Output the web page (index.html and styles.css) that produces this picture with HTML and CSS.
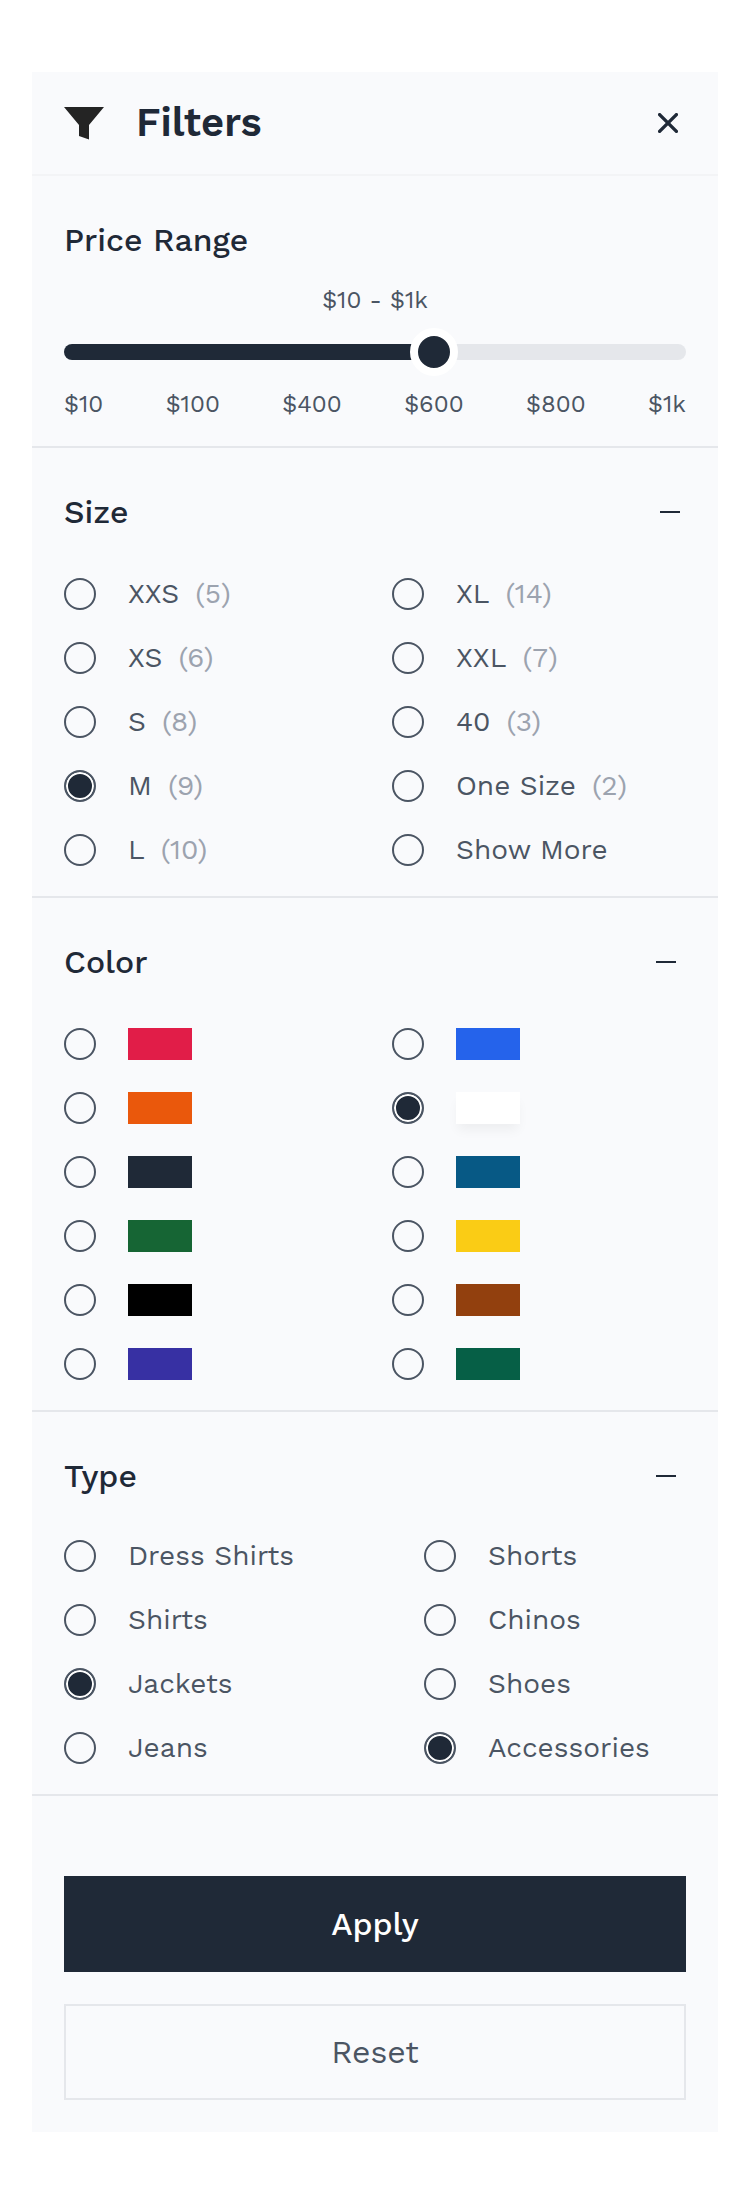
FILE: index.html
```html
<!DOCTYPE html>
<html lang="en">
<head>
    <meta charset="UTF-8">
    <meta name="viewport" content="width=device-width, initial-scale=1.0">
    <title>Filters</title>

    <link rel="stylesheet" href="styles.css">
</head>
<body>
    <form class="filters">
        <!-- Header -->
        <header class="filters-header">
            <svg class="funnel" viewBox="0 0 40 34" aria-hidden="true">
                <path d="M0 1H40L25 19V33.5L15 30V19Z" fill="#242424"/>
            </svg>
            <h1>Filters</h1>
            <button type="button" class="icon-button close" aria-label="Close">
                <svg viewBox="0 0 20 20"><path d="M1.6 1.6L18.4 18.4M18.4 1.6L1.6 18.4" stroke="currentColor" stroke-width="3.4" stroke-linecap="round"/></svg>
            </button>
        </header>

        <!-- Price range -->
        <section class="section price">
            <h2><label for="price">Price Range</label></h2>
            <output class="price-value" for="price">$10 - $1k</output>
            <input type="range" id="price" class="slider" min="0" max="1000" value="603">
            <div class="price-scale">
                <span>$10</span>
                <span>$100</span>
                <span>$400</span>
                <span>$600</span>
                <span>$800</span>
                <span>$1k</span>
            </div>
        </section>

        <!-- Size -->
        <section class="section size">
            <div class="section-head">
                <h2>Size</h2>
                <button type="button" class="icon-button" aria-label="Collapse size">
                    <svg viewBox="0 0 20 20"><path d="M0 10H20" stroke="currentColor" stroke-width="2"/></svg>
                </button>
            </div>
            <div class="options">
                <div class="column">
                    <label class="option"><input type="radio" name="size">XXS <span class="count">(5)</span></label>
                    <label class="option"><input type="radio" name="size">XS <span class="count">(6)</span></label>
                    <label class="option"><input type="radio" name="size">S <span class="count">(8)</span></label>
                    <label class="option"><input type="radio" name="size" checked>M <span class="count">(9)</span></label>
                    <label class="option"><input type="radio" name="size">L <span class="count">(10)</span></label>
                </div>
                <div class="column">
                    <label class="option"><input type="radio" name="size">XL <span class="count">(14)</span></label>
                    <label class="option"><input type="radio" name="size">XXL <span class="count">(7)</span></label>
                    <label class="option"><input type="radio" name="size">40 <span class="count">(3)</span></label>
                    <label class="option"><input type="radio" name="size">One Size <span class="count">(2)</span></label>
                    <label class="option"><input type="radio" name="size">Show More</label>
                </div>
            </div>
        </section>

        <!-- Color -->
        <section class="section color">
            <div class="section-head">
                <h2>Color</h2>
                <button type="button" class="icon-button" aria-label="Collapse color">
                    <svg viewBox="0 0 20 20"><path d="M0 10H20" stroke="currentColor" stroke-width="2"/></svg>
                </button>
            </div>
            <div class="options">
                <div class="column">
                    <label class="option"><input type="radio" name="color" aria-label="Red"><span class="swatch red"></span></label>
                    <label class="option"><input type="radio" name="color" aria-label="Orange"><span class="swatch orange"></span></label>
                    <label class="option"><input type="radio" name="color" aria-label="Navy"><span class="swatch navy"></span></label>
                    <label class="option"><input type="radio" name="color" aria-label="Green"><span class="swatch green"></span></label>
                    <label class="option"><input type="radio" name="color" aria-label="Black"><span class="swatch black"></span></label>
                    <label class="option"><input type="radio" name="color" aria-label="Indigo"><span class="swatch indigo"></span></label>
                </div>
                <div class="column">
                    <label class="option"><input type="radio" name="color" aria-label="Blue"><span class="swatch blue"></span></label>
                    <label class="option"><input type="radio" name="color" aria-label="White" checked><span class="swatch white"></span></label>
                    <label class="option"><input type="radio" name="color" aria-label="Sea blue"><span class="swatch sea"></span></label>
                    <label class="option"><input type="radio" name="color" aria-label="Yellow"><span class="swatch yellow"></span></label>
                    <label class="option"><input type="radio" name="color" aria-label="Brown"><span class="swatch brown"></span></label>
                    <label class="option"><input type="radio" name="color" aria-label="Emerald"><span class="swatch emerald"></span></label>
                </div>
            </div>
        </section>

        <!-- Type -->
        <section class="section type">
            <div class="section-head">
                <h2>Type</h2>
                <button type="button" class="icon-button" aria-label="Collapse type">
                    <svg viewBox="0 0 20 20"><path d="M0 10H20" stroke="currentColor" stroke-width="2"/></svg>
                </button>
            </div>
            <div class="options">
                <div class="column">
                    <label class="option"><input type="radio" name="type1">Dress Shirts</label>
                    <label class="option"><input type="radio" name="type1">Shirts</label>
                    <label class="option"><input type="radio" name="type1" checked>Jackets</label>
                    <label class="option"><input type="radio" name="type1">Jeans</label>
                </div>
                <div class="column">
                    <label class="option"><input type="radio" name="type2">Shorts</label>
                    <label class="option"><input type="radio" name="type2">Chinos</label>
                    <label class="option"><input type="radio" name="type2">Shoes</label>
                    <label class="option"><input type="radio" name="type2" checked>Accessories</label>
                </div>
            </div>
        </section>

        <!-- Buttons -->
        <div class="actions">
            <button type="submit" class="button apply">Apply</button>
            <button type="reset" class="button reset">Reset</button>
        </div>
    </form>
</body>
</html>
```
FILE: styles.css
```css
* {
    box-sizing: border-box;
}

body {
    margin: 0;
    padding: 72px 32px;
    background-color: #fff;
    color: #4b5563;
    font-family: "Work Sans", Inter, "Liberation Sans", sans-serif;
    font-size: 28px;
    line-height: 32px;
}

h1,
h2 {
    margin: 0;
    color: #1f2937;
}

h1 {
    flex: 1;
    font-size: 40px;
    font-weight: 600;
    line-height: 48px;
}

h2 {
    font-size: 32px;
    font-weight: 500;
    line-height: 32px;
}

.filters {
    background-color: #f9fafc;
}

/* Header */
.filters-header {
    display: flex;
    align-items: center;
    gap: 32px;
    height: 104px;
    padding: 0 32px;
    border-bottom: 2px solid #f3f4f6;
}

.funnel {
    width: 40px;
    height: 34px;
}

.icon-button {
    display: flex;
    justify-content: center;
    align-items: center;
    width: 40px;
    height: 32px;
    padding: 0;
    border: none;
    background: none;
    color: #1f2937;
    cursor: pointer;
}

.icon-button svg {
    width: 20px;
    height: 20px;
}

.close {
    width: 36px;
}

.size .icon-button {
    width: 32px;
}

/* Sections */
.section {
    padding: 48px 32px 30px;
    border-bottom: 2px solid #e5e7eb;
}

.section-head {
    display: flex;
    justify-content: space-between;
    align-items: center;
}

/* Price slider */
.price {
    display: flex;
    flex-direction: column;
    padding-bottom: 26px;
}

.price-value {
    margin-top: 28px;
    font-size: 24px;
    text-align: center;
}

.slider {
    -webkit-appearance: none;
    appearance: none;
    width: 100%;
    height: 48px;
    margin: 12px 0;
    background: none;
    cursor: pointer;
}

.slider::-webkit-slider-runnable-track {
    height: 16px;
    border-radius: 8px;
    background: linear-gradient(to right, #1f2937 60%, #e5e7eb 60%);
}

.slider::-webkit-slider-thumb {
    -webkit-appearance: none;
    width: 48px;
    height: 48px;
    margin-top: -16px;
    border: 8px solid #fff;
    border-radius: 50%;
    background-color: #1f2937;
}

.price-scale {
    display: flex;
    justify-content: space-between;
    font-size: 24px;
}

/* Radio options */
.options {
    display: grid;
    grid-template-columns: 328fr 294fr;
    margin-top: 50px;
}

.type .options {
    grid-template-columns: 360fr 262fr;
    margin-top: 48px;
}

.column {
    display: flex;
    flex-direction: column;
    gap: 32px;
}

.option {
    display: flex;
    align-items: center;
    height: 32px;
    white-space: nowrap;
}

.option input {
    -webkit-appearance: none;
    appearance: none;
    flex: none;
    width: 32px;
    height: 32px;
    margin: 0 32px 0 0;
    border: 2px solid #4b5563;
    border-radius: 50%;
    cursor: pointer;
}

.option input:checked {
    background-color: #1f2937;
    box-shadow: inset 0 0 0 2px #fff;
}

.count {
    margin-left: 16px;
    color: #9ca3af;
}

.swatch {
    width: 64px;
    height: 32px;
}

.red { background-color: #e11d48; }
.orange { background-color: #ea580c; }
.navy { background-color: #1f2937; }
.green { background-color: #166534; }
.black { background-color: #000; }
.indigo { background-color: #3730a3; }
.blue { background-color: #2563eb; }
.white {
    background-color: #fff;
    box-shadow: 0 8px 12px -2px rgba(0, 0, 0, 0.05);
}
.sea { background-color: #075985; }
.yellow { background-color: #facc15; }
.brown { background-color: #92400e; }
.emerald { background-color: #065f46; }

/* Buttons */
.actions {
    display: flex;
    flex-direction: column;
    gap: 32px;
    padding: 80px 32px 32px;
}

.button {
    height: 96px;
    border: 2px solid #e5e7eb;
    background: none;
    color: #4b5563;
    font-family: inherit;
    font-size: 32px;
    cursor: pointer;
}

.apply {
    border-color: #1f2937;
    background-color: #1f2937;
    color: #fff;
    font-weight: 500;
}
```
